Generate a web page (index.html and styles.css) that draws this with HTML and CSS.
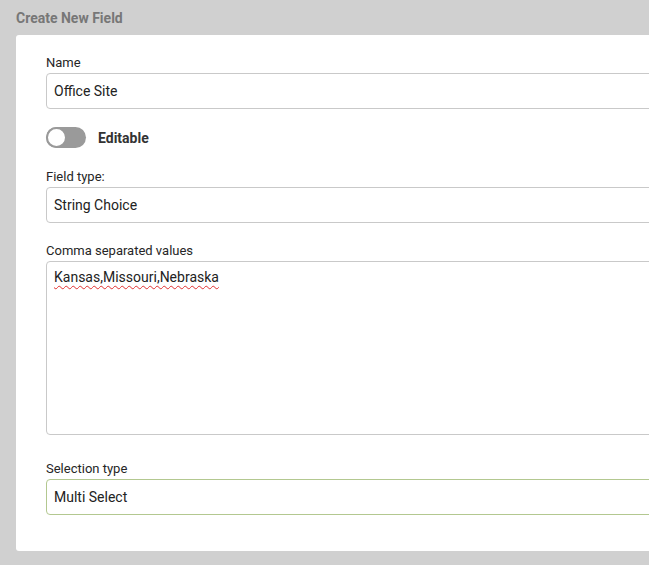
FILE: index.html
```html
<!DOCTYPE html>
<html lang="en">
<head>
  <meta charset="UTF-8" />
  <title>Create New Field</title>
  <link rel="stylesheet" href="styles.css">
</head>
<body>

  <div class="page">
    <h3 class="page-title">Create New Field</h3>

    <div class="card">
      <label class="field-label">Name</label>
      <input class="field-input" type="text" value="Office Site" />

      <div class="toggle-row">
        <span class="toggle"><span class="knob"></span></span>
        <span class="toggle-text">Editable</span>
      </div>

      <label class="field-label">Field type:</label>
      <div class="field-input type-input">String Choice</div>

      <label class="field-label">Comma separated values</label>
      <div class="field-input textarea"><span class="misspelt">Kansas,Missouri,Nebraska</span></div>

      <label class="field-label">Selection type</label>
      <div class="field-input focused">Multi Select</div>
    </div>
  </div>

</body>
</html>
```

FILE: styles.css
```css
html, body {
  overflow: hidden;
}

body {
  margin: 0;
  background: #d0d0d0;
  font-family: Roboto, "Liberation Sans", Arial, sans-serif;
  color: #262626;
}

.page {
  width: 720px;
  padding: 10px 0 0 16px;
}

.page-title {
  margin: 0 0 8px;
  font-size: 14px;
  font-weight: 700;
  color: #777;
  line-height: 17px;
}

.card {
  background: #fff;
  border-radius: 3px;
  padding: 21px 0 36px 30px;
  display: flex;
  flex-direction: column;
}

.field-label {
  font-size: 13px;
  line-height: 14px;
  margin-bottom: 3px;
  color: #262626;
}

.field-input {
  display: block;
  box-sizing: border-box;
  width: 100%;
  height: 36px;
  border: 1px solid #c9c9c9;
  border-radius: 4px;
  padding: 0 7px;
  font-family: inherit;
  font-size: 14px;
  line-height: 34px;
  color: #222;
  background: #fff;
  outline: none;
  margin: 0 0 14px;
}

.type-input {
  margin-bottom: 21px;
}

.field-input.textarea {
  height: 174px;
  line-height: 20px;
  padding-top: 5px;
  margin-bottom: 27px;
}

.field-input.focused {
  border-color: #b3c890;
  margin-bottom: 0;
}

.misspelt {
  text-decoration: underline wavy #e03030;
  text-decoration-thickness: 1px;
  text-underline-offset: 3px;
}

.toggle-row {
  display: flex;
  align-items: center;
  gap: 12px;
  margin: 4px 0 22px;
}

.toggle {
  position: relative;
  width: 40px;
  height: 21px;
  border-radius: 11px;
  background: #9a9a9a;
}

.knob {
  position: absolute;
  left: 0;
  top: 0;
  box-sizing: border-box;
  width: 21px;
  height: 21px;
  border-radius: 50%;
  background: #fff;
  border: 2px solid #9a9a9a;
}

.toggle-text {
  font-size: 14px;
  font-weight: 700;
  color: #333;
}
```
